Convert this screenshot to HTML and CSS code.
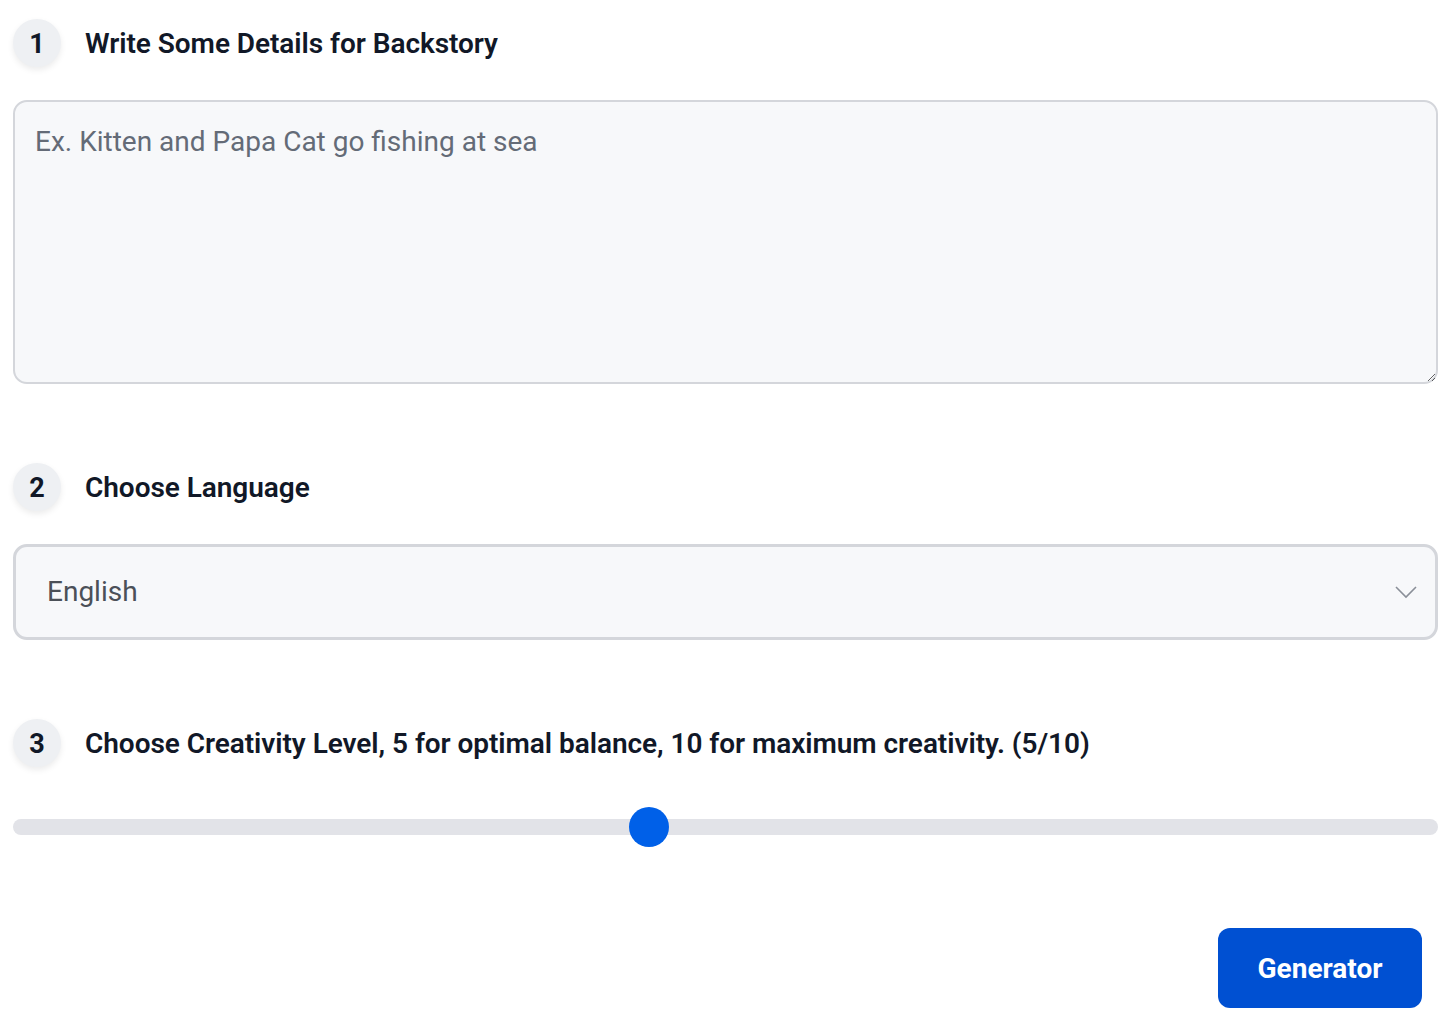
FILE: index.html
```html
<!DOCTYPE html>
<html lang="en">
<head>
    <meta charset="UTF-8">
    <meta name="viewport" content="width=device-width, initial-scale=1.0">
    <title>Backstory Generator</title>
    <link rel="stylesheet" href="styles.css">
</head>
<body>

    <div class="container">
        <div class="step">
            <span class="step-num">1</span>
            <h2 class="step-title">Write Some Details for Backstory</h2>
        </div>
        <textarea class="details" placeholder="Ex. Kitten and Papa Cat go fishing at sea"></textarea>

        <div class="step">
            <span class="step-num">2</span>
            <h2 class="step-title">Choose Language</h2>
        </div>
        <div class="select-wrap">
            <select class="language">
                <option>English</option>
                <option>Español</option>
                <option>Français</option>
                <option>Deutsch</option>
            </select>
            <svg class="chevron" width="22" height="14" viewBox="0 0 22 14">
                <path d="M1 2 L11 12 L21 2" fill="none" stroke="#8a8f98" stroke-width="1.6"/>
            </svg>
        </div>

        <div class="step">
            <span class="step-num">3</span>
            <h2 class="step-title">Choose Creativity Level, 5 for optimal balance, 10 for maximum creativity. (5/10)</h2>
        </div>
        <input type="range" class="creativity" min="1" max="10" value="5">

        <div class="actions">
            <button class="generate">Generator</button>
        </div>
    </div>

</body>
</html>
```

FILE: styles.css
```css
body {
    font-family: Roboto, "Noto Sans", Arial, sans-serif;
    background-color: #fff;
    margin: 0;
    padding: 0;
    color: #111827;
}

.container {
    width: 1425px;
    padding: 19px 0 0 13px;
}

.step {
    display: flex;
    align-items: center;
    height: 48px;
    gap: 24px;
}

.step-num {
    width: 48px;
    height: 48px;
    padding-top: 2px;
    box-sizing: border-box;
    border-radius: 50%;
    background-color: #eef0f3;
    box-shadow: 0 3px 6px rgba(0, 0, 0, 0.08);
    display: flex;
    justify-content: center;
    align-items: center;
    font-size: 27px;
    font-weight: 700;
    color: #111827;
}

.step-title {
    margin: 0;
    font-size: 28px;
    font-weight: 600;
    letter-spacing: -0.05px;
    color: #111827;
}

.details {
    display: block;
    box-sizing: border-box;
    width: 100%;
    height: 284px;
    margin: 33px 0 79px;
    padding: 23px 20px;
    border: 2px solid #d4d6db;
    border-radius: 14px;
    background-color: #f7f8fa;
    font-family: Roboto, Arial, sans-serif;
    font-size: 28px;
    color: #111827;
    outline: none;
}

.details::placeholder {
    color: #646b77;
}

.select-wrap {
    position: relative;
    margin: 33px 0 79px;
}

.language {
    display: block;
    box-sizing: border-box;
    width: 100%;
    height: 96px;
    padding: 0 31px 2px;
    border: 3px solid #d4d6db;
    border-radius: 14px;
    background-color: #f7f8fa;
    font-family: Roboto, Arial, sans-serif;
    font-size: 28px;
    color: #4b5058;
    appearance: none;
    -webkit-appearance: none;
    outline: none;
}

.chevron {
    position: absolute;
    right: 21px;
    top: 41px;
    pointer-events: none;
}

.creativity {
    display: block;
    width: 100%;
    height: 40px;
    margin: 40px 0 0;
    background: transparent;
    -webkit-appearance: none;
    appearance: none;
}

.creativity::-webkit-slider-runnable-track {
    height: 16px;
    border-radius: 8px;
    background-color: #e2e3e8;
}

.creativity::-webkit-slider-thumb {
    -webkit-appearance: none;
    width: 40px;
    height: 40px;
    margin-top: -12px;
    border-radius: 50%;
    border: none;
    background-color: #0060e8;
}

.actions {
    display: flex;
    justify-content: flex-end;
    padding: 81px 16px 0 0;
}

.generate {
    width: 204px;
    height: 80px;
    border: none;
    border-radius: 12px;
    background-color: #0050d2;
    color: #fff;
    font-family: Roboto, Arial, sans-serif;
    font-size: 28px;
    font-weight: 700;
    cursor: pointer;
}
```
